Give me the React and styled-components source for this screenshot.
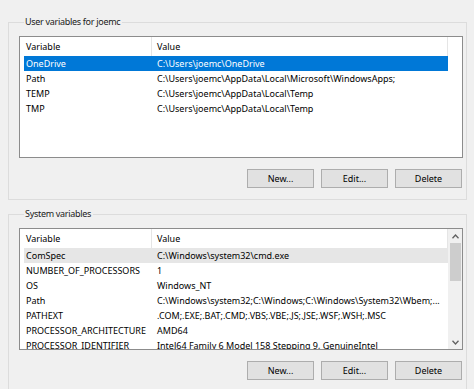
import React from "react";
import styled, { createGlobalStyle } from "styled-components";

const GlobalStyle = createGlobalStyle`
  html, body {
    margin: 0;
    padding: 0;
    background: #f0f0f0;
  }
  body {
    font-family: "Noto Sans", "Open Sans", sans-serif;
    font-size: 9px;
    color: #000;
  }
`;

const Page = styled.div`
  width: 474px;
  height: 389px;
  box-sizing: border-box;
  padding: 14px 7px 0 8px;
  display: flex;
  flex-direction: column;
  gap: 6px;
  overflow: hidden;
`;

const GroupBox = styled.fieldset`
  margin: 0;
  padding: 6px 3px 11px 10px;
  border: 1px solid #dcdcdc;
  min-width: 0;
`;

const Legend = styled.legend`
  margin-left: 5px;
  padding: 0 2px 0 1px;
  line-height: 16px;
  font-size: 9px;
  letter-spacing: -0.3px;
  color: #1a1a1a;
`;

const ListBox = styled.div`
  height: 122px;
  box-sizing: border-box;
  border: 1px solid #8c8c8c;
  background: #fff;
  display: flex;
  overflow: hidden;
`;

const ListBody = styled.div`
  flex: 1;
  min-width: 0;
  padding-left: 4px;
`;

const HeaderRow = styled.div`
  display: grid;
  grid-template-columns: 128px 1fr;
  height: 19px;
  align-items: center;
`;

const HeaderCell = styled.div`
  height: 100%;
  display: flex;
  align-items: center;
  padding-left: ${(p) => (p.$first ? "2px" : "5px")};
  border-right: 1px solid #e5e5e5;
  white-space: nowrap;
`;

const Row = styled.div`
  display: grid;
  grid-template-columns: 128px 1fr;
  height: 15px;
  align-items: center;
  background: ${(p) =>
    p.$selected === "active" ? "#0078d7" : p.$selected === "inactive" ? "#e6e6e6" : "transparent"};
  color: ${(p) => (p.$selected === "active" ? "#fff" : "#000")};
`;

const Cell = styled.div`
  padding-left: ${(p) => (p.$first ? "2px" : "5px")};
  white-space: nowrap;
  overflow: hidden;
`;

const ScrollGutter = styled.div`
  width: 14px;
  flex-shrink: 0;
  display: flex;
  flex-direction: column;
  align-items: center;
  background: ${(p) => (p.$active ? "#f0f0f0" : "#fff")};
`;

const ArrowButton = styled.div`
  height: 14px;
  width: 100%;
  display: flex;
  align-items: center;
  justify-content: center;
`;

const Thumb = styled.div`
  width: 11px;
  height: 38px;
  background: #cdcdcd;
`;

const Track = styled.div`
  flex: 1;
`;

const ButtonRow = styled.div`
  display: flex;
  justify-content: flex-end;
  gap: 7px;
  margin-top: 11px;
  padding-right: 1px;
`;

const Button = styled.button`
  width: 67px;
  height: 19px;
  box-sizing: border-box;
  border: 1px solid #adadad;
  background: #e1e1e1;
  font-family: inherit;
  font-size: 9px;
  color: #000;
  padding: 0;
`;

const Chevron = ({ up }) => (
  <svg width="7" height="5" viewBox="0 0 7 5">
    <path
      d={up ? "M0.5 4.2 L3.5 1 L6.5 4.2" : "M0.5 0.8 L3.5 4 L6.5 0.8"}
      fill="none"
      stroke="#606060"
      strokeWidth="1.3"
    />
  </svg>
);

const userVars = [
  ["OneDrive", "C:\\Users\\joemc\\OneDrive"],
  ["Path", "C:\\Users\\joemc\\AppData\\Local\\Microsoft\\WindowsApps;"],
  ["TEMP", "C:\\Users\\joemc\\AppData\\Local\\Temp"],
  ["TMP", "C:\\Users\\joemc\\AppData\\Local\\Temp"],
];

const systemVars = [
  ["ComSpec", "C:\\Windows\\system32\\cmd.exe"],
  ["NUMBER_OF_PROCESSORS", "1"],
  ["OS", "Windows_NT"],
  ["Path", "C:\\Windows\\system32;C:\\Windows;C:\\Windows\\System32\\Wbem;..."],
  ["PATHEXT", ".COM;.EXE;.BAT;.CMD;.VBS;.VBE;.JS;.JSE;.WSF;.WSH;.MSC"],
  ["PROCESSOR_ARCHITECTURE", "AMD64"],
  ["PROCESSOR_IDENTIFIER", "Intel64 Family 6 Model 158 Stepping 9, GenuineIntel"],
];

function VariableList({ rows, selected, selectedStyle, scroll }) {
  return (
    <ListBox>
      <ListBody>
        <HeaderRow>
          <HeaderCell $first>Variable</HeaderCell>
          <HeaderCell>Value</HeaderCell>
        </HeaderRow>
        {rows.map(([name, value], i) => (
          <Row key={name + i} $selected={i === selected ? selectedStyle : undefined}>
            <Cell $first>{name}</Cell>
            <Cell>{value}</Cell>
          </Row>
        ))}
      </ListBody>
      <ScrollGutter $active={scroll}>
        {scroll && (
          <>
            <ArrowButton>
              <Chevron up />
            </ArrowButton>
            <Thumb />
            <Track />
            <ArrowButton>
              <Chevron />
            </ArrowButton>
          </>
        )}
      </ScrollGutter>
    </ListBox>
  );
}

function VariableGroup({ title, rows, selectedStyle, scroll }) {
  return (
    <GroupBox>
      <Legend>{title}</Legend>
      <VariableList rows={rows} selected={0} selectedStyle={selectedStyle} scroll={scroll} />
      <ButtonRow>
        <Button>New...</Button>
        <Button>Edit...</Button>
        <Button>Delete</Button>
      </ButtonRow>
    </GroupBox>
  );
}

export default function App() {
  return (
    <>
      <GlobalStyle />
      <Page>
        <VariableGroup title="User variables for joemc" rows={userVars} selectedStyle="active" />
        <VariableGroup title="System variables" rows={systemVars} selectedStyle="inactive" scroll />
      </Page>
    </>
  );
}
